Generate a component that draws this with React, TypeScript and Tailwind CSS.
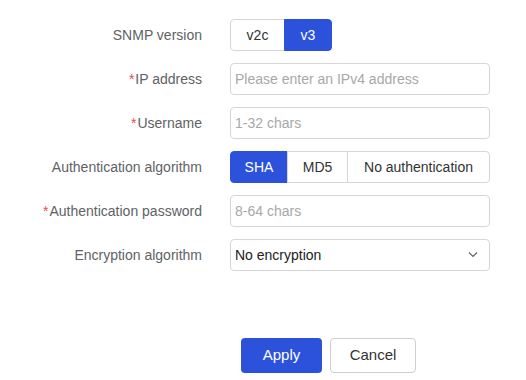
import React, { useState } from 'react';

const font = { fontFamily: '"Liberation Sans", Arial, sans-serif' };

const Label = ({ text, required }: { text: string; required?: boolean }) => (
  <div className="flex h-8 items-center justify-end text-[14px] text-[#606266]">
    {required && <span className="mr-[1px] text-[#e05050]">*</span>}
    {text}
  </div>
);

const Segmented = ({
  options,
  value,
  onChange,
  widths,
}: {
  options: string[];
  value: string;
  onChange: (v: string) => void;
  widths: string[];
}) => (
  <div className="flex h-8">
    {options.map((opt, i) => {
      const active = opt === value;
      const first = i === 0;
      const last = i === options.length - 1;
      return (
        <button
          key={opt}
          type="button"
          onClick={() => onChange(opt)}
          className={[
            'flex h-8 items-center justify-center text-[14px]',
            widths[i],
            first ? 'rounded-l-[4px]' : '',
            last ? 'rounded-r-[4px]' : '',
            active
              ? 'border border-[#2c52dc] bg-[#2c52dc] text-white'
              : 'border border-[#d6d6d6] bg-white text-[#333]',
            !first ? '-ml-px' : '',
          ].join(' ')}
        >
          {opt}
        </button>
      );
    })}
  </div>
);

const TextInput = ({ placeholder }: { placeholder: string }) => (
  <input
    placeholder={placeholder}
    className="h-8 w-[260px] rounded-[4px] border border-[#d6d6d6] px-[4px] text-[14px] text-[#333] outline-none placeholder:text-[#a8a8a8]"
  />
);

export default function App() {
  const [version, setVersion] = useState('v3');
  const [auth, setAuth] = useState('SHA');

  return (
    <div className="h-[380px] w-[526px] bg-white" style={font}>
      <div className="grid grid-cols-[202px_260px] gap-x-[28px] gap-y-3 pt-[19px]">
        <Label text="SNMP version" />
        <Segmented
          options={['v2c', 'v3']}
          value={version}
          onChange={setVersion}
          widths={['w-[55px]', 'w-[48px]']}
        />

        <Label text="IP address" required />
        <TextInput placeholder="Please enter an IPv4 address" />

        <Label text="Username" required />
        <TextInput placeholder="1-32 chars" />

        <Label text="Authentication algorithm" />
        <Segmented
          options={['SHA', 'MD5', 'No authentication']}
          value={auth}
          onChange={setAuth}
          widths={['w-[58px]', 'w-[61px]', 'w-[143px]']}
        />

        <Label text="Authentication password" required />
        <TextInput placeholder="8-64 chars" />

        <Label text="Encryption algorithm" />
        <div className="relative h-8 w-[260px]">
          <select className="h-8 w-full appearance-none rounded-[4px] border border-[#d6d6d6] bg-white px-[4px] text-[14px] text-[#222] outline-none">
            <option>No encryption</option>
            <option>AES</option>
            <option>DES</option>
          </select>
          <svg
            className="pointer-events-none absolute right-[12px] top-[12px]"
            width="10"
            height="7"
            viewBox="0 0 10 7"
            fill="none"
          >
            <path d="M1 1.5l4 4 4-4" stroke="#666" strokeWidth="1.2" />
          </svg>
        </div>
      </div>

      <div className="mt-[67px] flex gap-2 pl-[241px]">
        <button
          type="button"
          className="h-[35px] w-[81px] rounded-[4px] bg-[#2c52dc] text-[15px] text-white"
        >
          Apply
        </button>
        <button
          type="button"
          className="h-[35px] w-[86px] rounded-[4px] border border-[#cfcfcf] bg-white text-[15px] text-[#333]"
        >
          Cancel
        </button>
      </div>
    </div>
  );
}
